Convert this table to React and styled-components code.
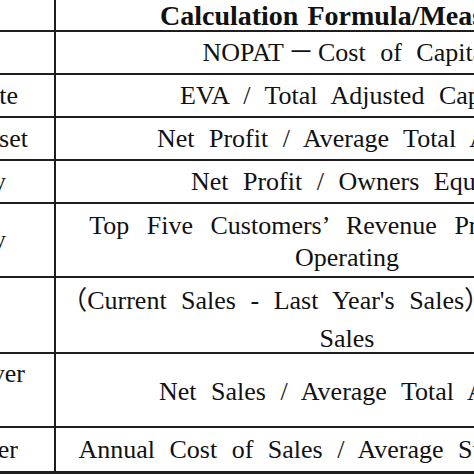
import React from 'react';
import styled, { createGlobalStyle } from 'styled-components';

const GlobalStyle = createGlobalStyle`
  html, body {
    margin: 0;
    padding: 0;
    background: #ffffff;
  }
  body {
    font-family: "Liberation Serif", "Noto Sans CJK SC", serif;
    color: #111;
  }
`;

const Viewport = styled.div`
  width: 474px;
  height: 474px;
  overflow: hidden;
  background: #fff;
`;

const Table = styled.div`
  display: flex;
  flex-direction: column;
  width: 854px;
  margin-left: -216px;
  font-size: 26px;
`;

const Row = styled.div`
  display: grid;
  grid-template-columns: 272px 582px;
  height: ${p => p.h}px;
  border-bottom: ${p => p.border || 2}px solid #1e1e1e;
  box-sizing: border-box;
`;

const HeaderRow = styled(Row)`
  font-size: 28px;
  font-weight: 700;
`;

const NameCell = styled.div`
  display: flex;
  align-items: center;
  justify-content: flex-end;
  padding-right: ${p => p.pr || 0}px;
  border-right: 2px solid #1e1e1e;
  box-sizing: border-box;
  overflow: hidden;
`;

const NameText = styled.div`
  text-align: center;
  white-space: nowrap;
  line-height: 32px;
`;

const FormulaCell = styled.div`
  display: flex;
  flex-direction: column;
  align-items: center;
  justify-content: center;
  text-align: center;
  white-space: nowrap;
  word-spacing: ${p => p.ws ?? 8}px;
  line-height: ${p => p.lh || 32}px;
  padding-top: ${p => p.pt || 0}px;
  padding-bottom: ${p => p.pb || 0}px;
  box-sizing: border-box;
`;

const Dash = styled.span`
  margin: 0 4px;
`;

const rows = [
  {
    name: ['EVA'],
    pr: 60,
    formula: [<>NOPAT<Dash>{'\uFF0D'}</Dash>Cost of Capital</>],
    h: 43,
  },
  { name: ['EVA Return Rate'], pr: 36, formula: ['EVA / Total Adjusted Capital'], h: 43 },
  { name: ['Net Return on Asset'], pr: 26, formula: ['Net Profit / Average Total Assets'], h: 43 },
  { name: ['Return on Equity'], pr: 48, formula: ['Net Profit / Owners Equity'], h: 43 },
  {
    name: ['Customer Dependency'],
    pr: 48,
    formula: ['Top Five Customers\u2019 Revenue Proportion of', 'Operating'],
    h: 74,
    pt: 4,
    ws: 11,
  },
  {
    name: ['Sales Growth'],
    pr: 60,
    formula: ['\uFF08Current Sales - Last Year\'s Sales\uFF09/ Last Year\'s', 'Sales'],
    h: 76,
    lh: 38,
    pt: 4,
  },
  {
    name: ['Total Asset Turnover', 'Rate'],
    pr: 29,
    formula: ['Net Sales / Average Total Assets'],
    h: 74,
    pt: 4,
  },
  {
    name: ['Inventory Turnover'],
    pr: 36,
    formula: ['Annual Cost of Sales / Average Stock Balance'],
    h: 46,
    border: 3,
  },
];

const Lines = ({ items }) => items.map((t, i) => <div key={i}>{t}</div>);

export default function App() {
  return (
    <Viewport>
      <GlobalStyle />
      <Table>
        <HeaderRow h={32}>
          <NameCell pr={90}>
            <NameText>Indicator</NameText>
          </NameCell>
          <FormulaCell pb={8} ws={2}>
            Calculation Formula/Measures
          </FormulaCell>
        </HeaderRow>
        {rows.map((r, i) => (
          <Row key={i} h={r.h} border={r.border}>
            <NameCell pr={r.pr}>
              <NameText>
                <Lines items={r.name} />
              </NameText>
            </NameCell>
            <FormulaCell lh={r.lh} pt={r.pt} ws={r.ws}>
              <Lines items={r.formula} />
            </FormulaCell>
          </Row>
        ))}
      </Table>
    </Viewport>
  );
}
